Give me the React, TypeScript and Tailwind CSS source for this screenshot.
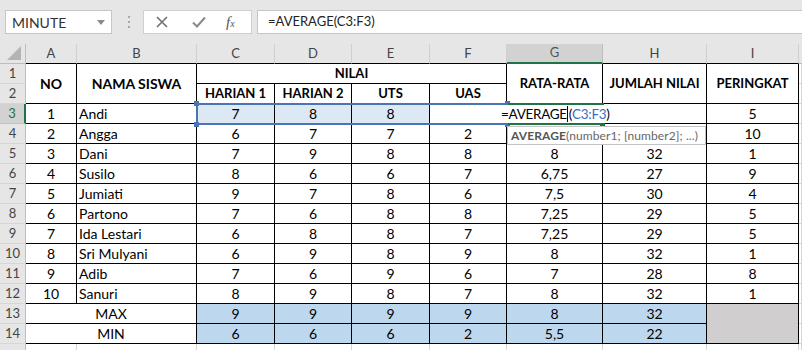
const rows = [
  { no: "1", name: "Andi", c: "7", d: "8", e: "8", f: "", g: "", h: "", i: "5" },
  { no: "2", name: "Angga", c: "6", d: "7", e: "7", f: "2", g: "", h: "", i: "10" },
  { no: "3", name: "Dani", c: "7", d: "9", e: "8", f: "8", g: "8", h: "32", i: "1" },
  { no: "4", name: "Susilo", c: "8", d: "6", e: "6", f: "7", g: "6,75", h: "27", i: "9" },
  { no: "5", name: "Jumiati", c: "9", d: "7", e: "8", f: "6", g: "7,5", h: "30", i: "4" },
  { no: "6", name: "Partono", c: "7", d: "6", e: "8", f: "8", g: "7,25", h: "29", i: "5" },
  { no: "7", name: "Ida Lestari", c: "6", d: "8", e: "8", f: "7", g: "7,25", h: "29", i: "5" },
  { no: "8", name: "Sri Mulyani", c: "6", d: "9", e: "8", f: "9", g: "8", h: "32", i: "1" },
  { no: "9", name: "Adib", c: "7", d: "6", e: "9", f: "6", g: "7", h: "28", i: "8" },
  { no: "10", name: "Sanuri", c: "8", d: "9", e: "8", f: "7", g: "8", h: "32", i: "1" },
];

const stats = [
  { label: "MAX", vals: ["9", "9", "9", "9", "8", "32"] },
  { label: "MIN", vals: ["6", "6", "6", "2", "5,5", "22"] },
];

const cell = "flex items-center justify-center border-r border-b border-black";
const rowHead =
  "flex items-center justify-center border-r border-b border-r-[#bdbdbd] border-b-[#d6d6d6] bg-[#e6e6e6] text-[13px] text-[#444]";
const blank = "border-r border-b border-[#d6d6d6] bg-white";

function RowHead({ n, active }: { n: string; active?: boolean }) {
  return active ? (
    <div className="flex items-center justify-center border-r-2 border-b border-r-[#217346] border-b-[#c4c4c4] bg-[#d2d2d2] text-[13px] text-[#217346]">
      {n}
    </div>
  ) : (
    <div className={rowHead}>{n}</div>
  );
}

export default function App() {
  const letters = ["A", "B", "C", "D", "E", "F", "G", "H", "I"];

  return (
    <div
      className="h-[350px] w-[802px] overflow-hidden bg-[#e6e6e6] text-black"
      style={{ fontFamily: "Lato, 'Open Sans', sans-serif" }}
    >
      {/* formula bar */}
      <div className="flex h-[44px] items-start pt-[10px]">
        <div className="ml-[5px] flex h-[24px] w-[107px] items-center justify-between border border-[#c6c6c6] bg-white pl-[6px] pr-[6px] text-[14px] text-[#333]">
          <span>MINUTE</span>
          <svg width="8" height="5" viewBox="0 0 8 5">
            <path d="M0 0 L8 0 L4 5 Z" fill="#8a8a8a" />
          </svg>
        </div>
        <div className="ml-[15px] flex h-[24px] w-[4px] flex-col items-center justify-center gap-[3px]">
          <span className="h-[2px] w-[2px] bg-[#a8a8a8]" />
          <span className="h-[2px] w-[2px] bg-[#a8a8a8]" />
          <span className="h-[2px] w-[2px] bg-[#a8a8a8]" />
        </div>
        <div className="ml-[12px] flex h-[24px] w-[109px] items-center border border-[#d0d0d0] bg-white">
          <svg className="ml-[12px]" width="12" height="12" viewBox="0 0 12 12">
            <path d="M1 1 L11 11 M11 1 L1 11" stroke="#707070" strokeWidth="1.6" />
          </svg>
          <svg className="ml-[24px]" width="14" height="12" viewBox="0 0 14 12">
            <path d="M1 6.5 L5 10.5 L13 1.5" stroke="#8a8a8a" strokeWidth="2" fill="none" />
          </svg>
          <span
            className="ml-[20px] text-[15px] italic text-[#555]"
            style={{ fontFamily: "'Liberation Serif', serif" }}
          >
            f<span className="text-[10px]">x</span>
          </span>
        </div>
        <div className="ml-[5px] flex h-[24px] flex-1 items-center border-y border-l border-[#c6c6c6] bg-white pl-[10px] text-[13px] text-[#222]">
          =AVERAGE(C3:F3)
        </div>
      </div>

      {/* sheet */}
      <div className="relative grid grid-cols-[26px_51px_120px_78px_77px_78px_77px_96px_104px_92px_1fr] auto-rows-[20px] bg-white text-[14px]">
        {/* column headers */}
        <div className="relative border-r border-b border-r-[#bdbdbd] border-b-[#bdbdbd] bg-[#e6e6e6]">
          <svg className="absolute right-[4px] bottom-[3px]" width="14" height="14" viewBox="0 0 14 14">
            <path d="M14 0 L14 14 L0 14 Z" fill="#b4b4b4" />
          </svg>
        </div>
        {letters.map((l) =>
          l === "G" ? (
            <div
              key={l}
              className="flex items-center justify-center border-r border-b-2 border-r-[#bdbdbd] border-b-[#217346] bg-[#d2d2d2] text-[13px] text-[#555]"
            >
              {l}
            </div>
          ) : (
            <div
              key={l}
              className="flex items-center justify-center border-r border-b border-r-[#d0d0d0] border-b-black bg-[#e6e6e6] text-[13px] text-[#444]"
            >
              {l}
            </div>
          )
        )}
        <div className="border-b border-[#bdbdbd] bg-[#e6e6e6]" />

        {/* row 1 */}
        <RowHead n="1" />
        <div className={`${cell} row-span-2 text-[14px] font-bold`}>NO</div>
        <div className={`${cell} row-span-2 text-[14px] font-bold`}>NAMA SISWA</div>
        <div className={`${cell} col-span-4 text-[13px] font-bold`}>NILAI</div>
        <div className={`${cell} row-span-2 text-[13px] font-bold`}>RATA-RATA</div>
        <div className={`${cell} row-span-2 text-[13px] font-bold`}>JUMLAH NILAI</div>
        <div className={`${cell} row-span-2 text-[13px] font-bold`}>PERINGKAT</div>
        <div className={blank} />

        {/* row 2 */}
        <RowHead n="2" />
        <div className={`${cell} text-[13px] font-bold`}>HARIAN 1</div>
        <div className={`${cell} text-[13px] font-bold`}>HARIAN 2</div>
        <div className={`${cell} text-[13px] font-bold`}>UTS</div>
        <div className={`${cell} text-[13px] font-bold`}>UAS</div>
        <div className={blank} />

        {/* data rows */}
        {rows.map((r, idx) => {
          const first = idx === 0;
          const fill = first ? "bg-[#dde8f5]" : "";
          return [
            <RowHead key={`h${r.no}`} n={String(idx + 3)} active={first} />,
            <div key={`a${r.no}`} className={cell}>{r.no}</div>,
            <div key={`b${r.no}`} className={`${cell} justify-start pl-[2px]`}>{r.name}</div>,
            <div key={`c${r.no}`} className={`${cell} ${fill}`}>{r.c}</div>,
            <div key={`d${r.no}`} className={`${cell} ${fill}`}>{r.d}</div>,
            <div key={`e${r.no}`} className={`${cell} ${fill}`}>{r.e}</div>,
            <div key={`f${r.no}`} className={cell}>{r.f}</div>,
            <div key={`g${r.no}`} className={cell}>{r.g}</div>,
            <div key={`i${r.no}`} className={cell}>{r.h}</div>,
            <div key={`j${r.no}`} className={cell}>{r.i}</div>,
            <div key={`k${r.no}`} className={blank} />,
          ];
        })}

        {/* MAX / MIN */}
        {stats.map((s, idx) => [
          <RowHead key={`sh${s.label}`} n={String(13 + idx)} />,
          <div key={`sl${s.label}`} className={`${cell} col-span-2`}>{s.label}</div>,
          ...s.vals.map((v, j) => (
            <div key={`sv${s.label}${j}`} className={`${cell} bg-[#bdd7ee]`}>{v}</div>
          )),
          ...(idx === 0
            ? [<div key="gray" className={`${cell} row-span-2 bg-[#d0cece]`} />]
            : []),
          <div key={`sk${s.label}`} className={blank} />,
        ])}

        {/* row 15, only its top edge shows */}
        <RowHead n="" />
        {letters.map((l) => (
          <div key={`r15${l}`} className={blank} />
        ))}
        <div className={blank} />

        {/* range selection C3:F3 */}
        <div className="pointer-events-none absolute left-[196px] top-[59px] h-[22px] w-[312px] border-2 border-[#4a74b4]" />
        <span className="absolute left-[194px] top-[57px] h-[5px] w-[5px] bg-[#4a74b4]" />
        <span className="absolute left-[194px] top-[78px] h-[5px] w-[5px] bg-[#4a74b4]" />
        <span className="absolute left-[505px] top-[57px] h-[5px] w-[5px] bg-[#4a74b4]" />
        <span className="absolute left-[505px] top-[78px] h-[5px] w-[5px] bg-[#4a74b4]" />

        {/* active cell G3 in edit mode */}
        <div className="pointer-events-none absolute left-[508px] top-[59px] h-[22px] w-[96px] border-y-2 border-r-2 border-[#217346]" />
        <span className="absolute left-[600px] top-[78px] h-[5px] w-[5px] bg-[#217346]" />
        <div className="absolute left-[500px] top-[61px] flex h-[18px] items-center whitespace-nowrap bg-white px-[1px] text-[13.5px] tracking-[-0.3px]">
          <span>=AVERAGE</span>
          <span className="mx-[0.5px] h-[16px] w-[1px] bg-black" />
          <span>(</span>
          <span className="text-[#3a6fc2]">C3:F3</span>
          <span>)</span>
        </div>

        {/* function tooltip */}
        <div className="absolute left-[507px] top-[82px] flex h-[19px] w-[199px] items-center whitespace-nowrap border border-[#c4c4c4] bg-white pl-[3px] text-[12px] tracking-[0.1px] text-[#666]">
          <span className="font-bold text-[#555]">AVERAGE</span>
          <span>(number1; [number2]; ...)</span>
        </div>
      </div>
    </div>
  );
}
